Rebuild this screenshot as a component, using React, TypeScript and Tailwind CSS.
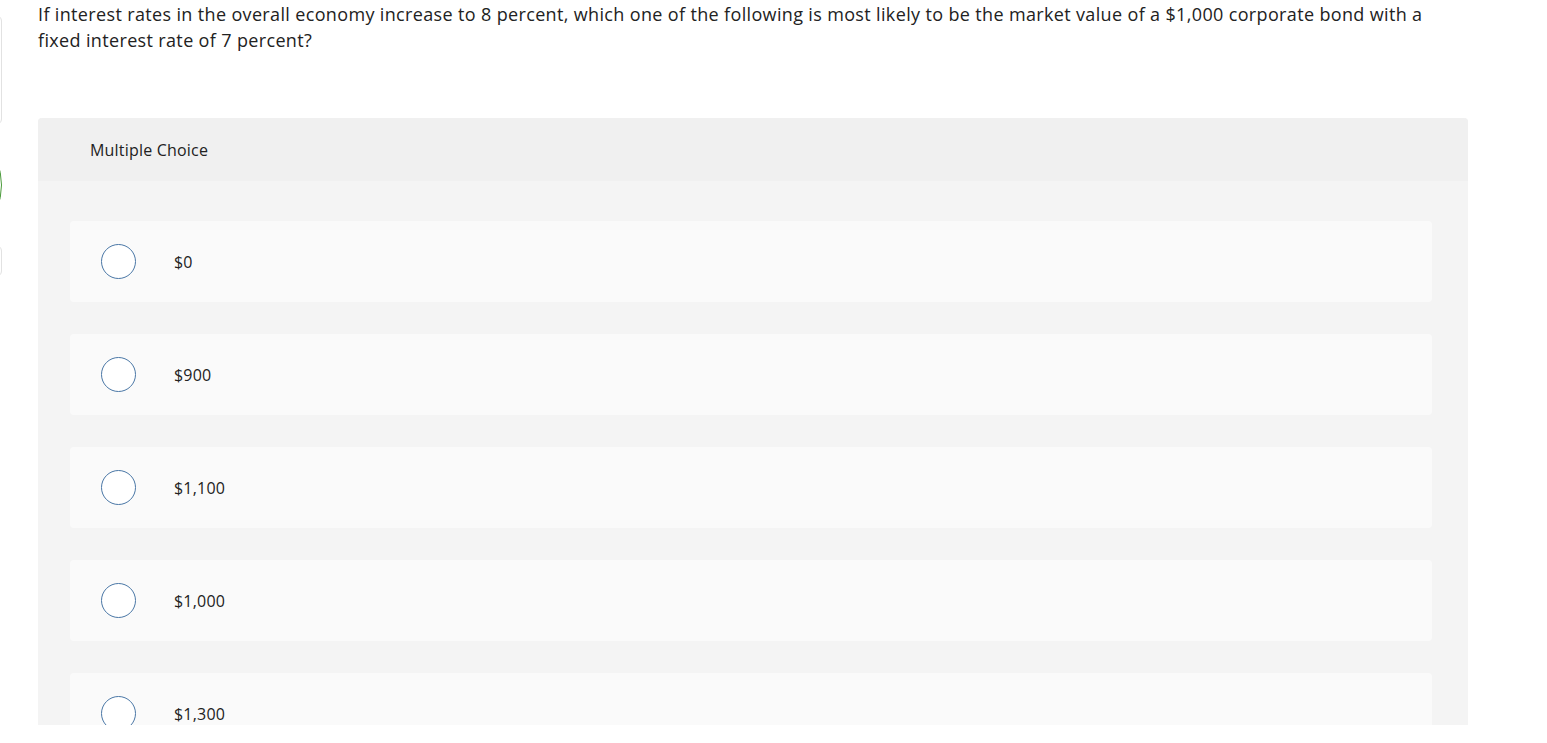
import { useState } from 'react';

const choices = ['$0', '$900', '$1,100', '$1,000', '$1,300'];

export default function App() {
  const [picked, setPicked] = useState<number | null>(null);

  return (
    <div className="relative h-[743px] w-full overflow-hidden bg-white font-['Open_Sans','Liberation_Sans',sans-serif] text-[#222]">
      {/* bits of the side rail peeking in from the left */}
      <div className="absolute left-[-128px] top-[120px] h-[130px] w-[130px] rounded-full border-[1.5px] border-[#4a9a3a] bg-white" />
      <div className="absolute left-[-40px] top-[15px] h-[110px] w-[42px] rounded-md border border-[#e2e2e2] bg-white" />
      <div className="absolute left-[-40px] top-[245px] h-[32px] w-[42px] rounded-md border border-[#e2e2e2] bg-white" />

      <div className="relative h-[725px] overflow-hidden pl-[38px] pr-[79px]">
        <p className="max-w-[1400px] pt-[1px] text-[18px] leading-[26px] tracking-[0.35px]">
          If interest rates in the overall economy increase to 8 percent, which one of the following is most likely to be the market value of a $1,000 corporate bond with a fixed interest rate of 7 percent?
        </p>

        <div className="mt-[65px] rounded-t-[4px] bg-[#f4f4f4]">
          <div className="flex h-[63px] items-center rounded-t-[4px] bg-[#f0f0f0] pl-[52px] text-[16px] tracking-[0.2px]">
            Multiple Choice
          </div>
          <div className="flex flex-col gap-[32px] pl-[32px] pr-[36px] pt-[40px] pb-[40px]">
            {choices.map((c, i) => (
              <button
                key={c}
                onClick={() => setPicked(i)}
                className="flex h-[81px] items-center rounded-[4px] bg-[#fafafa] pl-[31px] text-left"
              >
                <span className="flex h-[35px] w-[35px] items-center justify-center rounded-full border-[1.5px] border-[#4a77a6] bg-white">
                  {picked === i && <span className="h-[17px] w-[17px] rounded-full bg-[#4a77a6]" />}
                </span>
                <span className="ml-[38px] text-[16px] tracking-[0.2px]">{c}</span>
              </button>
            ))}
          </div>
        </div>
      </div>
    </div>
  );
}
